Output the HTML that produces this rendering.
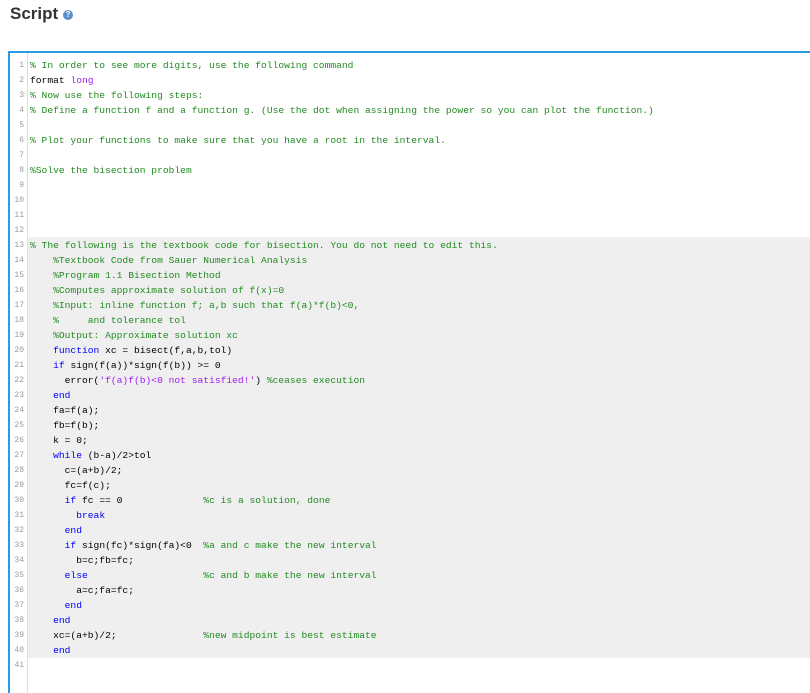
<!DOCTYPE html>
<html><head><meta charset="utf-8"><style>
body{margin:0;background:#fff;width:810px;height:677px;overflow:hidden;font-family:"Liberation Sans",sans-serif;}
h1{position:absolute;left:10px;top:4px;margin:0;font-size:17px;font-weight:bold;color:#333;}
.help{position:absolute;left:63px;top:10px;width:10px;height:10px;border-radius:50%;background:#5a8fc6;color:#fff;font-size:8px;font-weight:bold;text-align:center;line-height:10px;}
.ed{position:absolute;left:8px;top:51px;width:810px;height:640px;border-top:2px solid #2b9be6;border-left:2px solid #2b9be6;}
.gut{position:absolute;left:0;top:0;width:17px;height:100%;border-right:1px solid #ddd;}
.l{position:absolute;left:0;height:15px;width:800px;}
.n{position:absolute;left:0;width:14px;text-align:right;font:8px/15px "Liberation Mono",monospace;color:#999;}
.c{position:absolute;left:20px;font:9.63px/15px "Liberation Mono",monospace;white-space:pre;color:#000;}
.g{position:absolute;left:18px;top:184px;width:800px;height:421px;background:#efefef;}
.cm{color:#228b22}.kw{color:#0000ff}.st{color:#a020f0}
</style></head><body>
<h1>Script</h1><div class="help">?</div>
<div class="ed">
<div class="gut"></div>
<div class="g"></div>
<div class="l" style="top:5px"><span class="n">1</span><span class="c"><span class="cm">% In order to see more digits, use the following command</span></span></div>
<div class="l" style="top:20px"><span class="n">2</span><span class="c">format <span class="st">long</span></span></div>
<div class="l" style="top:35px"><span class="n">3</span><span class="c"><span class="cm">% Now use the following steps:</span></span></div>
<div class="l" style="top:50px"><span class="n">4</span><span class="c"><span class="cm">% Define a function f and a function g. (Use the dot when assigning the power so you can plot the function.)</span></span></div>
<div class="l" style="top:65px"><span class="n">5</span></div>
<div class="l" style="top:80px"><span class="n">6</span><span class="c"><span class="cm">% Plot your functions to make sure that you have a root in the interval.</span></span></div>
<div class="l" style="top:95px"><span class="n">7</span></div>
<div class="l" style="top:110px"><span class="n">8</span><span class="c"><span class="cm">%Solve the bisection problem</span></span></div>
<div class="l" style="top:125px"><span class="n">9</span></div>
<div class="l" style="top:140px"><span class="n">10</span></div>
<div class="l" style="top:155px"><span class="n">11</span></div>
<div class="l" style="top:170px"><span class="n">12</span></div>
<div class="l" style="top:185px"><span class="n">13</span><span class="c"><span class="cm">% The following is the textbook code for bisection. You do not need to edit this.</span></span></div>
<div class="l" style="top:200px"><span class="n">14</span><span class="c">    <span class="cm">%Textbook Code from Sauer Numerical Analysis</span></span></div>
<div class="l" style="top:215px"><span class="n">15</span><span class="c">    <span class="cm">%Program 1.1 Bisection Method</span></span></div>
<div class="l" style="top:230px"><span class="n">16</span><span class="c">    <span class="cm">%Computes approximate solution of f(x)=0</span></span></div>
<div class="l" style="top:245px"><span class="n">17</span><span class="c">    <span class="cm">%Input: inline function f; a,b such that f(a)*f(b)&lt;0,</span></span></div>
<div class="l" style="top:260px"><span class="n">18</span><span class="c">    <span class="cm">%     and tolerance tol</span></span></div>
<div class="l" style="top:275px"><span class="n">19</span><span class="c">    <span class="cm">%Output: Approximate solution xc</span></span></div>
<div class="l" style="top:290px"><span class="n">20</span><span class="c">    <span class="kw">function</span> xc = bisect(f,a,b,tol)</span></div>
<div class="l" style="top:305px"><span class="n">21</span><span class="c">    <span class="kw">if</span> sign(f(a))*sign(f(b)) &gt;= 0</span></div>
<div class="l" style="top:320px"><span class="n">22</span><span class="c">      error(<span class="st">'f(a)f(b)&lt;0 not satisfied!'</span>) <span class="cm">%ceases execution</span></span></div>
<div class="l" style="top:335px"><span class="n">23</span><span class="c">    <span class="kw">end</span></span></div>
<div class="l" style="top:350px"><span class="n">24</span><span class="c">    fa=f(a);</span></div>
<div class="l" style="top:365px"><span class="n">25</span><span class="c">    fb=f(b);</span></div>
<div class="l" style="top:380px"><span class="n">26</span><span class="c">    k = 0;</span></div>
<div class="l" style="top:395px"><span class="n">27</span><span class="c">    <span class="kw">while</span> (b-a)/2&gt;tol</span></div>
<div class="l" style="top:410px"><span class="n">28</span><span class="c">      c=(a+b)/2;</span></div>
<div class="l" style="top:425px"><span class="n">29</span><span class="c">      fc=f(c);</span></div>
<div class="l" style="top:440px"><span class="n">30</span><span class="c">      <span class="kw">if</span> fc == 0              <span class="cm">%c is a solution, done</span></span></div>
<div class="l" style="top:455px"><span class="n">31</span><span class="c">        <span class="kw">break</span></span></div>
<div class="l" style="top:470px"><span class="n">32</span><span class="c">      <span class="kw">end</span></span></div>
<div class="l" style="top:485px"><span class="n">33</span><span class="c">      <span class="kw">if</span> sign(fc)*sign(fa)&lt;0  <span class="cm">%a and c make the new interval</span></span></div>
<div class="l" style="top:500px"><span class="n">34</span><span class="c">        b=c;fb=fc;</span></div>
<div class="l" style="top:515px"><span class="n">35</span><span class="c">      <span class="kw">else</span>                    <span class="cm">%c and b make the new interval</span></span></div>
<div class="l" style="top:530px"><span class="n">36</span><span class="c">        a=c;fa=fc;</span></div>
<div class="l" style="top:545px"><span class="n">37</span><span class="c">      <span class="kw">end</span></span></div>
<div class="l" style="top:560px"><span class="n">38</span><span class="c">    <span class="kw">end</span></span></div>
<div class="l" style="top:575px"><span class="n">39</span><span class="c">    xc=(a+b)/2;               <span class="cm">%new midpoint is best estimate</span></span></div>
<div class="l" style="top:590px"><span class="n">40</span><span class="c">    <span class="kw">end</span></span></div>
<div class="l" style="top:605px"><span class="n">41</span></div>
</div>
</body></html>
